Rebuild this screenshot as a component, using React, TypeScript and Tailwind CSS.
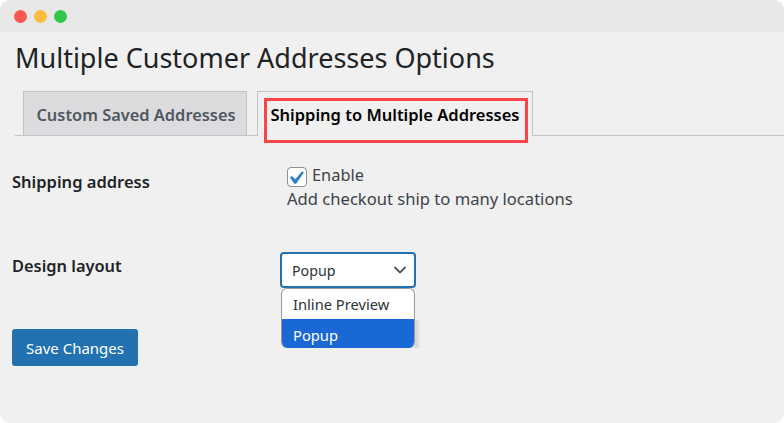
import { ChevronDown } from "lucide-react";

function Dot({ color }: { color: string }) {
  return <span className={`h-[13px] w-[13px] rounded-full ${color}`} />;
}

export default function App() {
  return (
    <div className="h-[423px] w-[784px] overflow-hidden bg-white font-['Noto_Sans',sans-serif]">
      <div className="h-full rounded-[10px] bg-[#f0f0f0]">
        {/* Title bar */}
        <div className="flex h-8 items-center gap-[7px] rounded-t-[10px] bg-[#e8e8e8] pl-[14px] pt-[1px]">
          <Dot color="bg-[#fc5753]" />
          <Dot color="bg-[#fdbc40]" />
          <Dot color="bg-[#33c748]" />
        </div>

        <h1 className="ml-[15px] mt-[8px] h-[36px] text-[27px] leading-[36px] text-[#1d2327]">
          Multiple Customer Addresses Options
        </h1>

        {/* Tabs */}
        <div className="ml-[15px] mt-[15px] flex h-[45px] gap-[10px] border-b border-[#c3c4c7] pl-2">
          <div className="flex h-[44px] w-[224px] items-center justify-center border border-b-0 border-[#c3c4c7] bg-[#dcdcde] pl-[2px] pt-[3px] text-[16.4px] font-semibold text-[#50575e]">
            Custom Saved Addresses
          </div>
          <div className="relative flex h-[45px] w-[276px] justify-center border border-b-0 border-[#c3c4c7] bg-[#f0f0f0] pt-[11px] text-[16.5px] font-semibold text-black">
            Shipping to Multiple Addresses
            <span className="absolute left-[6px] top-[6px] h-[45px] w-[264px] border-[3px] border-[#f9444a]" />
          </div>
        </div>

        {/* Form */}
        <div className="ml-3 mt-[31px] flex h-[85px]">
          <div className="w-[275px] pt-[4px] text-[16.5px] font-semibold leading-[22px] text-[#1d2327]">
            Shipping address
          </div>
          <div className="text-[16.6px] leading-[24px] text-[#3c434a]">
            <div className="flex h-[20px] items-center gap-[5px] text-[16.4px]">
              <span className="flex h-5 w-5 items-center justify-center rounded-[4px] border border-[#8c8f94] bg-white">
                <svg viewBox="5 4 12 11" className="h-[15px] w-[16px] fill-[#2f7fc4]">
                  <path d="M14.83 4.89l1.34.94-5.81 8.38H9.02L5.78 9.67l1.34-1.25 2.57 2.4z" />
                </svg>
              </span>
              <span className="-mt-[4px]">Enable</span>
            </div>
            <div>Add checkout ship to many locations</div>
          </div>
        </div>

        <div className="ml-3 flex">
          <div className="w-[268px] pt-[3px] text-[16.4px] font-semibold leading-[22px] text-[#1d2327]">
            Design layout
          </div>
          <div className="relative">
            <div className="flex h-9 w-[136px] items-center justify-between rounded-[4px] border-2 border-[#2271b1] bg-white pl-[10px] pr-[4px] text-[14.2px] text-[#2c3338]">
              <span className="mt-[2px]">Popup</span>
              <ChevronDown size={20} strokeWidth={2.2} className="text-[#50575e]" />
            </div>
            {/* Open list with the native popup's clipped shadow */}
            <div className="absolute left-0 top-[36px] h-[60px] w-[145px] overflow-hidden">
              <span className="absolute left-[133px] top-[32px] h-[28px] w-[6px] bg-[#d9d9d9] blur-[1px]" />
              <div className="absolute left-[1px] top-0 h-[60px] w-[134px] overflow-hidden rounded-[6px] border-x border-t border-[#9a9a9a] bg-white text-[14.7px]">
                <div className="flex h-[30px] items-center pl-[11px] text-[#2c3338]">Inline Preview</div>
                <div className="flex h-[30px] items-center bg-[#1a68d4] pl-[11px] pt-[2px] text-white">Popup</div>
              </div>
            </div>
          </div>
        </div>

        <button className="ml-3 mt-[41px] h-[37px] w-[126px] rounded-[3px] bg-[#2271b1] pt-[1px] text-[15px] text-white">
          Save Changes
        </button>
      </div>
    </div>
  );
}
